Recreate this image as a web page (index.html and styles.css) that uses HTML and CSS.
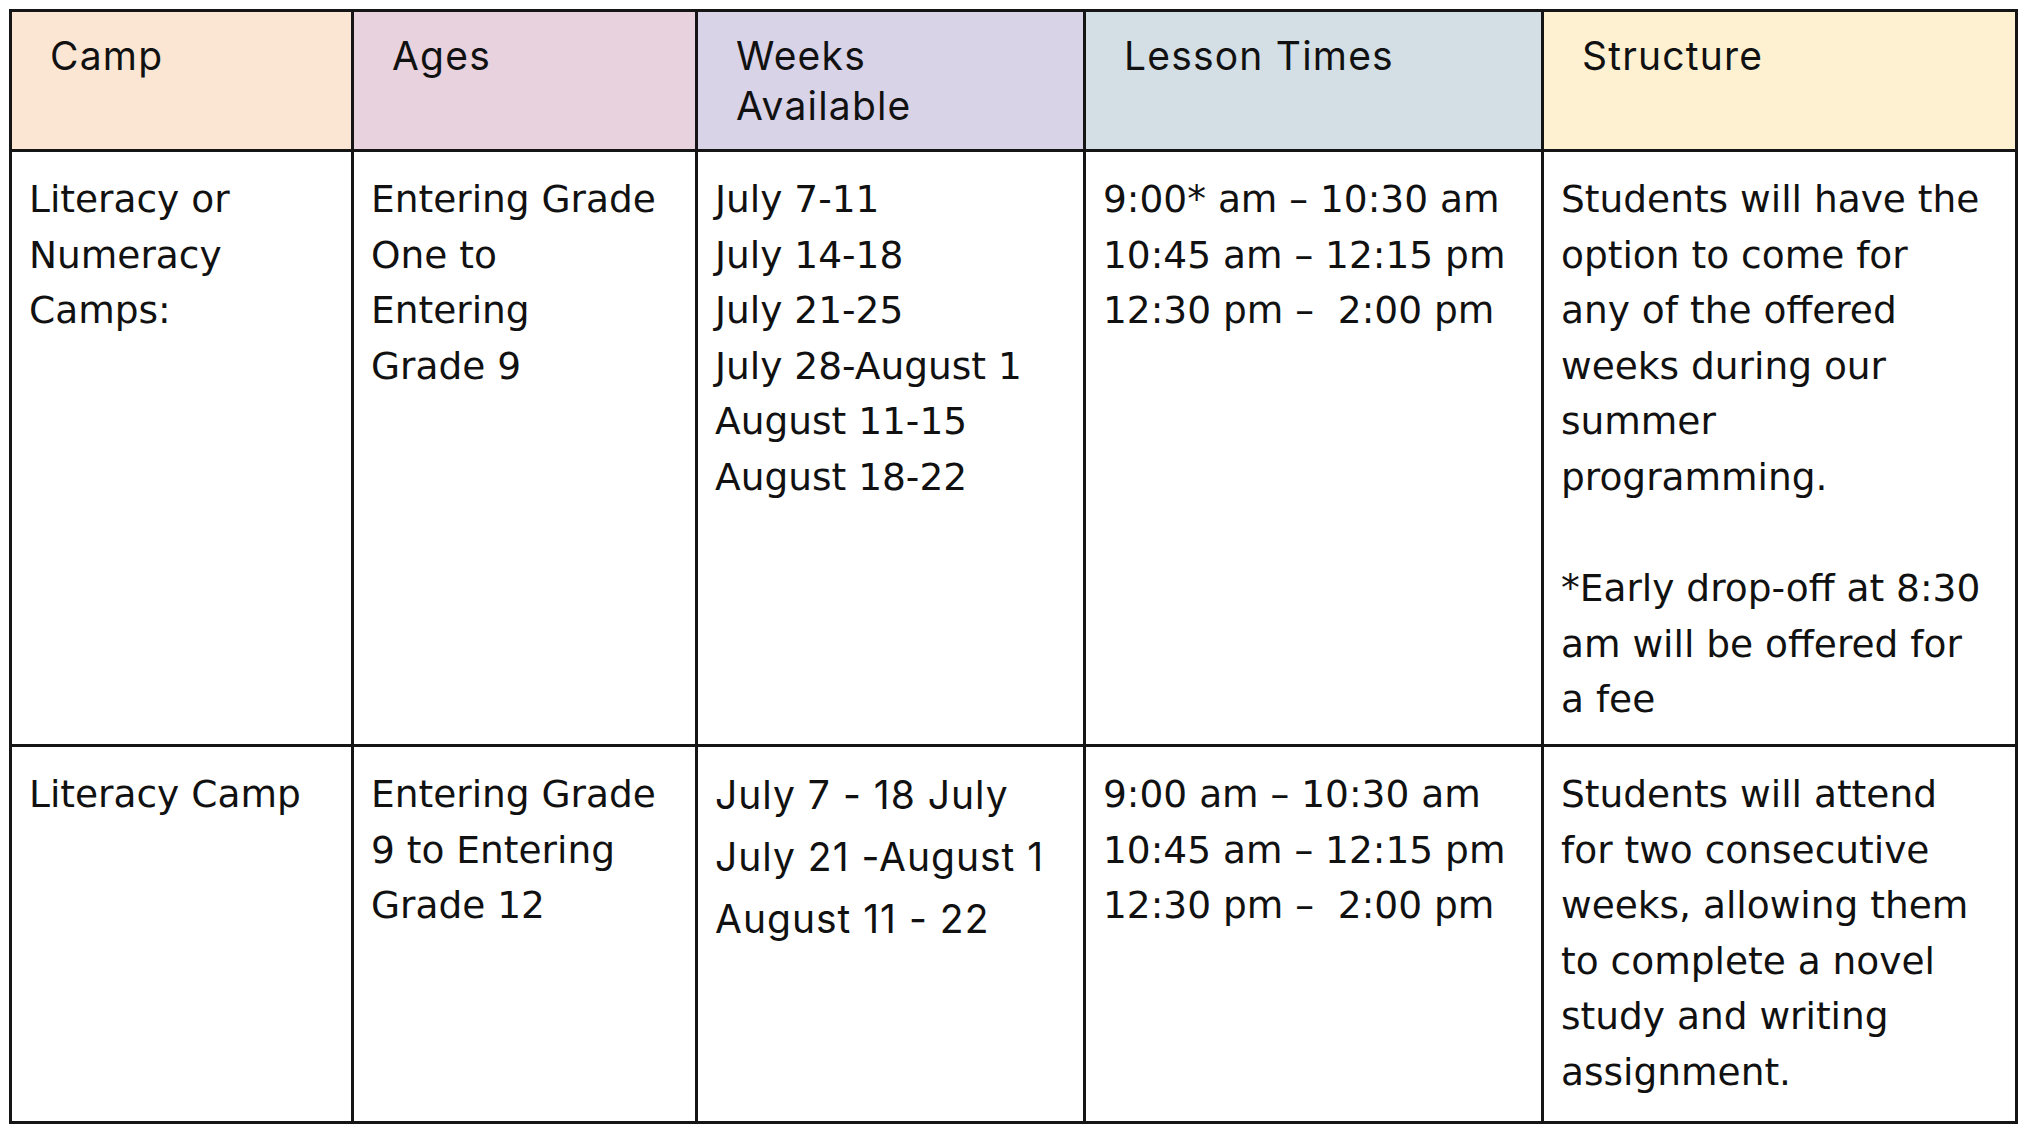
FILE: index.html
```html
<!DOCTYPE html>
<html lang="en">
<head>
<meta charset="utf-8">
<title>Summer Camps</title>
<link rel="stylesheet" href="styles.css">
</head>
<body>
<div class="wrap">
<table class="camps">
  <colgroup>
    <col class="c1"><col class="c2"><col class="c3"><col class="c4"><col class="c5">
  </colgroup>
  <thead>
    <tr class="head">
      <th class="h-camp">Camp</th>
      <th class="h-ages">Ages</th>
      <th class="h-weeks">Weeks<br>Available</th>
      <th class="h-times">Lesson Times</th>
      <th class="h-struct">Structure</th>
    </tr>
  </thead>
  <tbody>
    <tr class="row1">
      <td>Literacy or<br>Numeracy<br>Camps:</td>
      <td>Entering Grade<br>One to<br>Entering<br>Grade 9</td>
      <td>July 7-11<br>July 14-18<br>July 21-25<br>July 28-August 1<br>August 11-15<br>August 18-22</td>
      <td>9:00* am – 10:30 am<br>10:45 am – 12:15 pm<br>12:30 pm –&nbsp; 2:00 pm</td>
      <td>Students will have the<br>option to come for<br>any of the offered<br>weeks during our<br>summer<br>programming.<br><br>*Early drop-off at 8:30<br>am will be offered for<br>a fee</td>
    </tr>
    <tr class="row2">
      <td>Literacy Camp</td>
      <td>Entering Grade<br>9 to Entering<br>Grade 12</td>
      <td class="dates">July 7 - 18 July<br>July 21 -August 1<br>August 11 - 22</td>
      <td>9:00 am – 10:30 am<br>10:45 am – 12:15 pm<br>12:30 pm –&nbsp; 2:00 pm</td>
      <td>Students will attend<br>for two consecutive<br>weeks, allowing them<br>to complete a novel<br>study and writing<br>assignment.</td>
    </tr>
  </tbody>
</table>
</div>
</body>
</html>
```
FILE: styles.css
```css
html, body {
  margin: 0;
  padding: 0;
  background: #ffffff;
}
.wrap {
  padding: 9px 0 0 9px;
}
.camps {
  border-collapse: collapse;
  table-layout: fixed;
  width: 2006px;
  color: #111111;
}
.c1 { width: 342px; }
.c2 { width: 344px; }
.c3 { width: 388px; }
.c4 { width: 458px; }
.c5 { width: 474px; }

.camps th, .camps td {
  border: 3px solid #151515;
  vertical-align: top;
  text-align: left;
  white-space: nowrap;
}
.camps th {
  font-family: Inter, "Noto Sans", sans-serif;
  font-weight: 400;
  font-size: 39px;
  letter-spacing: 1.2px;
  line-height: 50px;
  padding: 19px 0 0 38px;
  height: 117px;
  box-sizing: border-box;
}
.head { height: 140px; }
.h-camp { background: #fbe6d3; }
.h-ages { background: #e7d2de; }
.h-weeks { background: #d9d3e8; }
.h-times { background: #d3dfe4; }
.h-struct { background: #fdf1d1; }

.camps td {
  font-family: "DejaVu Sans", Lato, sans-serif;
  font-size: 37.5px;
  line-height: 55.6px;
  padding: 20px 0 0 17px;
}
.row1 { height: 595px; }
.row2 { height: 377px; }
.camps td.dates {
  font-family: Inter, "Noto Sans", sans-serif;
  font-size: 39px;
  letter-spacing: 1px;
  line-height: 62px;
  padding-top: 17px;
}
```
